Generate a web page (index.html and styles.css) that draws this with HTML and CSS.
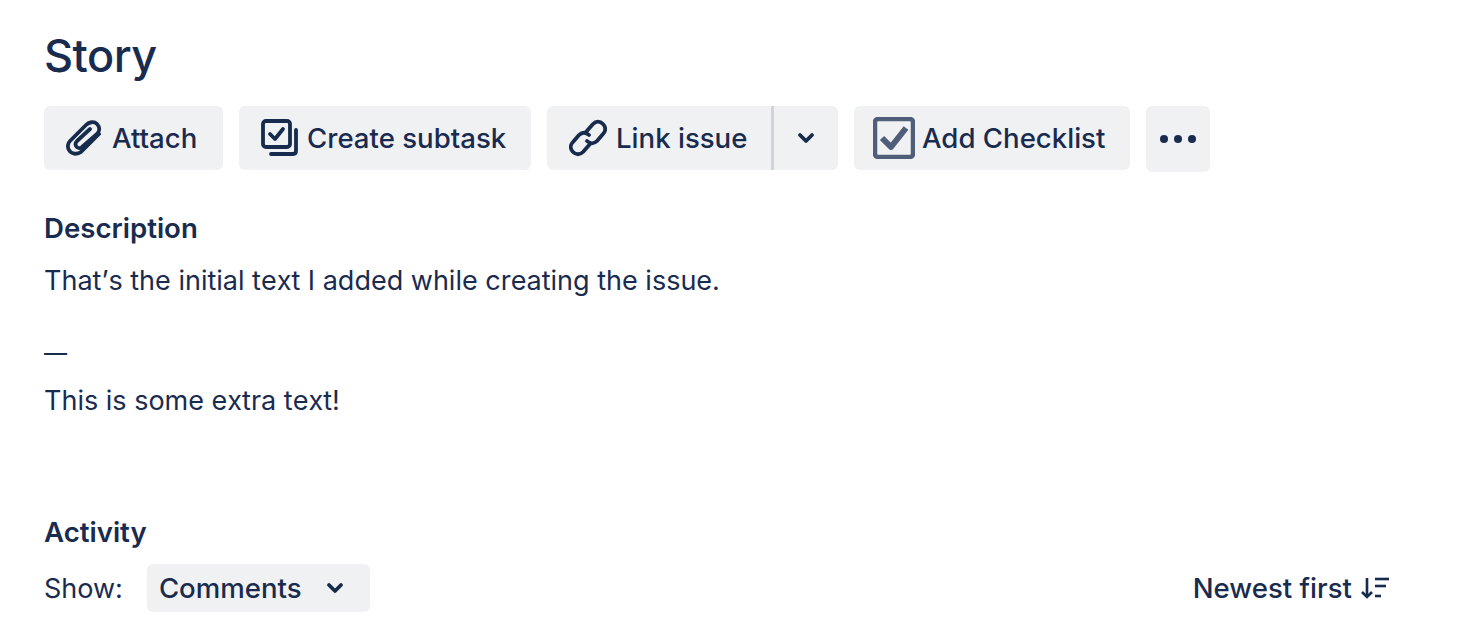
FILE: index.html
```html
<!DOCTYPE html>
<html lang="en">
  <head>
    <meta charset="UTF-8">
    <title>Story</title>
    <link rel="stylesheet" href="styles.css">
  </head>
  <body>
    <h1 class="title">Story</h1>

    <div class="toolbar">
      <button class="btn btn-attach">
        <svg class="icon" width="36" height="36" viewBox="0 0 36 36" fill="none" stroke="#172b4d" stroke-width="3.8" stroke-linecap="round" stroke-linejoin="round"><path d="M33 14 L15 32 C11 35 5 34 3 30 C1 27 2 23 4 21 L20 5 C23 2 28 1 31 4 C34 7 34 11 31 14 L16 27 C14 29 11 28 10 26 C9 24 10 22 11 21 L24 9"/></svg>
        <span>Attach</span>
      </button>
      <button class="btn btn-subtask">
        <svg class="icon" width="38" height="38" viewBox="0 0 38 38" fill="none" stroke="#172b4d" stroke-width="3.8" stroke-linecap="round" stroke-linejoin="round"><rect x="2" y="2" width="27" height="26" rx="3"/><path d="M9 15 L14 20 L22 10"/><path d="M10 35 H32 C34 35 35 34 35 32 V11"/></svg>
        <span>Create subtask</span>
      </button>
      <div class="split">
        <button class="btn btn-link">
          <svg class="icon" width="38" height="38" viewBox="0 0 38 38" fill="none" stroke="#172b4d" stroke-width="3.8" stroke-linecap="round" stroke-linejoin="round"><path d="M17 13 L24 5 C27 2 31 2 34 5 C37 8 37 12 34 15 L28 22 C25 25 21 25 18 22"/><path d="M21 25 L14 33 C11 36 7 36 4 33 C1 30 1 26 4 23 L10 16 C13 13 17 13 20 16"/></svg>
          <span>Link issue</span>
        </button>
        <button class="btn btn-caret">
          <svg width="18" height="12" viewBox="0 0 18 12" fill="none" stroke="#172b4d" stroke-width="3.8" stroke-linecap="round" stroke-linejoin="round"><path d="M3 3 L9 9 L15 3"/></svg>
        </button>
      </div>
      <button class="btn btn-check">
        <svg class="icon" width="42" height="42" viewBox="0 0 42 42" fill="none"><rect x="2" y="2" width="38" height="38" rx="3" stroke="#505f79" stroke-width="4.5"/><path d="M9 21 L18 30 L33 11" stroke="#505f79" stroke-width="6" stroke-linejoin="round"/></svg>
        <span>Add Checklist</span>
      </button>
      <button class="btn btn-more">
        <span class="dot"></span><span class="dot"></span><span class="dot"></span>
      </button>
    </div>

    <h2 class="heading heading-desc">Description</h2>
    <div class="description">
      <p>That’s the initial text I added while creating the issue.</p>
      <p class="dash">—</p>
      <p>This is some extra text!</p>
    </div>

    <h2 class="heading heading-activity">Activity</h2>
    <div class="activity-row">
      <span class="show-label">Show:</span>
      <button class="btn btn-select">
        <span>Comments</span>
        <svg width="18" height="12" viewBox="0 0 18 12" fill="none" stroke="#172b4d" stroke-width="3.8" stroke-linecap="round" stroke-linejoin="round"><path d="M3 3 L9 9 L15 3"/></svg>
      </button>
      <div class="sort">
        <span>Newest first</span>
        <svg width="30" height="24" viewBox="0 0 30 24" fill="none" stroke="#172b4d" stroke-width="2.6"><path d="M7 2 V21"/><path d="M2 16 L7 21 L12 16"/><path d="M15 3 H29"/><path d="M15 10 H26"/><path d="M15 20 H21"/></svg>
      </div>
    </div>
  </body>
</html>
```

FILE: styles.css
```css
* { box-sizing: border-box; }

body {
  margin: 0;
  padding: 0 82px 0 44px;
  background: #fff;
  color: #1a2b50;
  font-family: Inter, "Noto Sans", sans-serif;
  font-size: 27px;
  line-height: 40px;
}

.title {
  margin: 0;
  padding-top: 28px;
  height: 106px;
  font-size: 45px;
  line-height: 56px;
  font-weight: 500;
  letter-spacing: -0.5px;
}

.toolbar {
  display: flex;
  align-items: flex-start;
  gap: 16px;
}

.btn {
  display: flex;
  align-items: center;
  height: 64px;
  padding: 0;
  border: none;
  border-radius: 6px;
  background: #f0f1f3;
  color: #1a2b50;
  font: inherit;
  font-size: 27.6px;
  font-weight: 500;
}

.btn-attach { width: 179px; padding-left: 22px; gap: 10px; }
.btn-subtask { width: 292px; padding-left: 22px; gap: 8px; }

.split { display: flex; }
.btn-link {
  width: 224px;
  padding-left: 22px;
  gap: 9px;
  border-radius: 6px 0 0 6px;
}
.btn-caret {
  width: 67px;
  justify-content: center;
  border-left: 3px solid #d0d3dc;
  border-radius: 0 6px 6px 0;
}

.btn-check { width: 276px; padding-left: 19px; gap: 7px; }

.btn-more {
  width: 64px;
  height: 66px;
  justify-content: center;
  gap: 6px;
}
.dot {
  width: 8px;
  height: 8px;
  border-radius: 50%;
  background: #1a2b50;
}

.heading {
  margin: 0;
  font-size: 27.6px;
  line-height: 40px;
  font-weight: 600;
}
.heading-desc { margin-top: 36px; }
.heading-activity { margin-top: 91px; }

.description { margin-top: 13px; font-kerning: none; }
.description p { margin: 0; }
.dash { margin-top: 32px !important; margin-bottom: 8px !important; font-size: 23px; }

.activity-row {
  display: flex;
  align-items: center;
  margin-top: 12px;
}

.show-label { margin-right: 24px; padding-top: 2px; }

.btn-select {
  width: 223px;
  height: 48px;
  padding-left: 12px;
  gap: 24px;
}

.sort {
  display: flex;
  align-items: center;
  gap: 8px;
  margin-left: auto;
  font-size: 27.6px;
  font-weight: 500;
}
```
